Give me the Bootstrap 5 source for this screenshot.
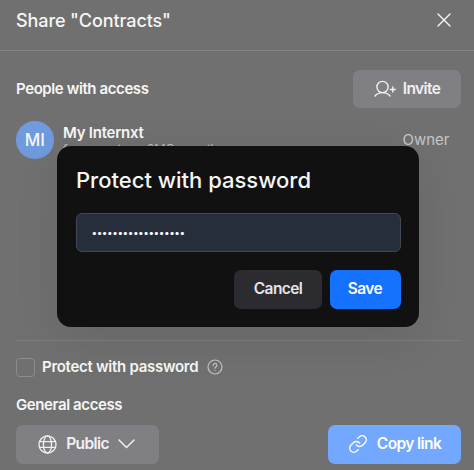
<!DOCTYPE html>
<html lang="en">
<head>
  <meta charset="UTF-8">
  <meta name="viewport" content="width=device-width, initial-scale=1.0">
  <title>Share "Contracts"</title>
  <link href="https://cdn.jsdelivr.net/npm/bootstrap@5.3.0/dist/css/bootstrap.min.css" rel="stylesheet">
  <style>
    body {
      background: #707070;
      color: #f6f6f6;
      font-family: Inter, "Liberation Sans", sans-serif;
      font-size: 15px;
      font-weight: 600;
      line-height: 20px;
      height: 470px;
      overflow: hidden;
    }
    svg { fill: none; stroke: currentColor; stroke-linecap: round; stroke-linejoin: round; flex: none; }

    .share-header { height: 51px; padding: 0 20px 10px 16px; border-bottom: 1px solid #858585; }
    .share-title { font-size: 18px; font-weight: 500; letter-spacing: -.1px; padding-top: 1px; }
    .share-body { padding: 18.5px 13px 0 16px; }
    .section-label { letter-spacing: -.4px; }

    .btn {
      --bs-btn-font-size: 15.5px;
      --bs-btn-font-weight: 600;
      --bs-btn-border-radius: 7px;
      --bs-btn-line-height: 20px;
      height: 38.5px;
      padding: 0;
      border: 0;
      color: #f3f3f5;
      letter-spacing: -.6px;
    }
    .btn-soft, .btn-soft:hover { background: #807f84; color: #f0f0f3; }
    .btn-copy, .btn-copy:hover { background: #72a8ff; color: #fff; }
    .btn-cancel, .btn-cancel:hover { background: #2c2c30; color: #e5e5ea; width: 88px; }
    .btn-save, .btn-save:hover { background: #1472ff; color: #fff; width: 71px; }
    .btn-invite { width: 108px; gap: 7px; }
    .btn-public { width: 142.5px; gap: 9.5px; }
    .btn-public svg:first-child { margin-left: -1.5px; }
    .btn-link-copy { width: 133px; gap: 9px; }

    .people { height: 220px; margin-top: 13px; border-bottom: 1px solid #7d7d7d; }
    .avatar { width: 37.5px; height: 37.5px; margin-right: 9.5px; background: #6f9ade; font-size: 17px; font-weight: 500; }
    .user-info { margin-top: 1px; }
    .user-name { letter-spacing: -.25px; line-height: 19px; }
    .user-mail { font-size: 12.5px; font-weight: 400; line-height: 15px; color: #bdbdbd; }
    .owner { color: #c6c6c6; font-weight: 400; padding-right: 11.5px; }

    .protect { margin-top: 16px; height: 20px; }
    .protect label { margin: 0 9px 0 7px; letter-spacing: -.28px; }
    .protect svg { color: #c4c4c4; }
    .form-check-input { width: 19px; height: 19px; margin: 0; background-color: transparent; border: 1px solid #8d8d8d; }
    .general { margin: 17.5px 0 10.5px; }

    .dialog {
      left: 57px;
      top: 146px;
      width: 362px;
      height: 180.5px;
      padding: 20px 18.5px 18.5px 19px;
      border-radius: 14px;
      background: #111;
      box-shadow: 0 12px 45px rgba(0, 0, 0, .09);
    }
    .dialog-title { font-size: 22px; font-weight: 500; line-height: 28px; margin-bottom: 19px; }
    .form-control, .form-control:focus {
      height: 38.5px;
      padding: 0 14.5px;
      background: #272e3b;
      border: 1px solid #414854;
      border-radius: 6px;
      color: #fff;
      font-size: 10px;
      letter-spacing: -.45px;
      box-shadow: none;
    }
    .dialog-actions { margin-top: 18.5px; gap: 7.5px; }
  </style>
</head>
<body>
  <header class="share-header d-flex align-items-center justify-content-between">
    <h1 class="share-title mb-0">Share "Contracts"</h1>
    <svg width="20" height="20" viewBox="0 0 20 20" stroke-width="1.4"><path d="M4 4l12 12M16 4L4 16"/></svg>
  </header>

  <main class="share-body">
    <div class="d-flex align-items-center justify-content-between">
      <span class="section-label">People with access</span>
      <button class="btn btn-soft btn-invite d-flex align-items-center justify-content-center">
        <svg width="22" height="18" viewBox="0 0 22 18" stroke-width="1.4"><circle cx="8.5" cy="7" r="5.6"/><path d="M1 16c1.700-2.200 4.300-3.400 7.500-3.400s5.800 1.200 7.500 3.400M16.300 9.500h5M18.800 7v5"/></svg>
        <span>Invite</span>
      </button>
    </div>

    <div class="people">
      <div class="d-flex align-items-center">
        <div class="avatar rounded-circle d-flex align-items-center justify-content-center">MI</div>
        <div class="user-info flex-grow-1">
          <div class="user-name">My Internxt</div>
          <div class="user-mail">fsmarcosimon6MGsgmail.com</div>
        </div>
        <div class="owner">Owner</div>
      </div>
    </div>

    <div class="protect d-flex align-items-center">
      <input class="form-check-input" type="checkbox" id="protect">
      <label for="protect">Protect with password</label>
      <svg width="16" height="16" viewBox="0 0 16 16" stroke-width="1.2"><circle cx="8" cy="8" r="7"/><path d="M6.100 6.400a1.900 1.900 0 1 1 2.700 1.700q-.8.4-.8 1.100M8 11.400v.1"/></svg>
    </div>

    <div class="general section-label">General access</div>

    <div class="d-flex justify-content-between">
      <button class="btn btn-soft btn-public d-flex align-items-center justify-content-center">
        <svg width="19" height="19" viewBox="0 0 20 20" stroke-width="1.4"><circle cx="10" cy="10" r="9"/><ellipse cx="10" cy="10" rx="4.300" ry="9"/><path d="M1.600 7h16.800M1.600 13h16.800"/></svg>
        <span>Public</span>
        <svg width="17" height="10" viewBox="0 0 17 10" stroke-width="1.500"><path d="M1 1l7.500 7.500L16 1"/></svg>
      </button>
      <button class="btn btn-copy btn-link-copy d-flex align-items-center justify-content-center">
        <svg width="20" height="20" viewBox="0 0 24 24" stroke-width="1.700"><path d="M10 13a5 5 0 0 0 7.540.540l3-3a5 5 0 0 0-7.070-7.070l-1.720 1.710M14 11a5 5 0 0 0-7.540-.540l-3 3a5 5 0 0 0 7.070 7.070l1.710-1.710"/></svg>
        <span>Copy link</span>
      </button>
    </div>
  </main>

  <div class="dialog position-absolute" role="dialog">
    <h2 class="dialog-title">Protect with password</h2>
    <input class="form-control" type="password" value="passwordpasswordpa">
    <div class="dialog-actions d-flex justify-content-end">
      <button class="btn btn-cancel">Cancel</button>
      <button class="btn btn-save">Save</button>
    </div>
  </div>
</body>
</html>
